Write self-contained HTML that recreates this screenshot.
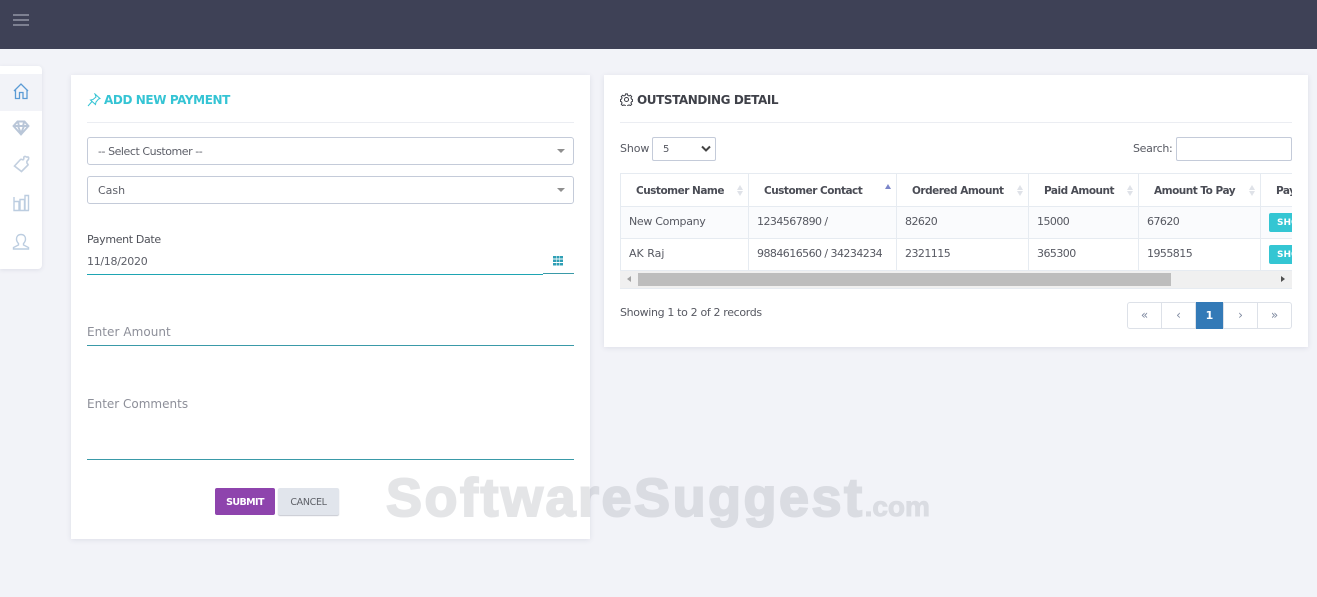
<!DOCTYPE html>
<html><head><meta charset="utf-8"><style>
html,body{margin:0;padding:0}
body{width:1317px;height:597px;background:#f2f3f8;position:relative;overflow:hidden;font-family:"DejaVu Sans","Liberation Sans",sans-serif;font-size:11px;color:#575962}
.a,.t{position:absolute}
.t{white-space:nowrap;line-height:14px}
.panel{position:absolute;background:#fff;box-shadow:0 1px 5px rgba(80,85,120,.12)}
.sel{position:absolute;left:87px;width:485px;height:26px;border:1px solid #c4cbd9;border-radius:3px;background:#fff}
.car{position:absolute;left:557px;width:0;height:0;border-left:4px solid transparent;border-right:4px solid transparent;border-top:4px solid #8f8f8f}
.line{position:absolute;height:1px}
.th{font-weight:bold;color:#4a4c55;font-size:10.5px;letter-spacing:-.5px}
.d{letter-spacing:-.55px}
.v{position:absolute;width:1px;background:#e6ebf1}
.h{position:absolute;left:620px;width:672px;height:1px;background:#e6ebf1}
.s{position:absolute;width:0;height:0;border-left:3px solid transparent;border-right:3px solid transparent}
.pg{position:absolute;top:302px;height:27px;box-sizing:border-box;border:1px solid #dde1e8;background:#fff;color:#7f8aa0;text-align:center;line-height:25px;font-size:12px}
</style></head><body>
<div class="a" style="left:0;top:0;width:1317px;height:49px;background:#3e4156"></div>
<div class="a" style="left:13px;top:14px;width:16px;height:2px;background:#7d8091"></div>
<div class="a" style="left:13px;top:19px;width:16px;height:2px;background:#7d8091"></div>
<div class="a" style="left:13px;top:24px;width:16px;height:2px;background:#7d8091"></div>

<div class="a" style="left:0;top:66px;width:42px;height:203px;background:#fff;border-radius:0 4px 4px 0;box-shadow:0 1px 4px rgba(80,85,120,.12)"></div>
<div class="a" style="left:0;top:74px;width:42px;height:37px;background:#f2f3f8"></div>
<svg class="a" style="left:0;top:66px" width="42" height="203" fill="none" stroke-width="1.3">
<path d="M14 25l7-7 7 7M15.500 23.500v9h4v-6h3.500v6h4v-9" stroke="#5b9bd5"/>
<path d="M17.500 55.500h7l4 4.500-7.500 8.500-7.500-8.500zM14 60h14M18 60l3 7.500 3-7.500M18 56l1 4M24 56l-1 4" stroke="#b9c6d8" stroke-width="1.900"/>
<path d="M14.500 100l6-6.500c1-1 2 1 3 0s-.5-2.500 1-3 1.500 1 3 .5 1.500 2 .5 3-1.500 1.500-1 3 1.500 1 1 2l-6.500 6.500z" stroke="#c2cfdf" stroke-width="1.600"/>
<path d="M14 131v13.500h5v-9h-5M20 144.500v-11h4.500v11M25 144.500v-15h3.500v15M14 144.500h15" stroke="#bccde0" stroke-width="1.400"/>
<path d="M21 168.500c3 0 4.500 2 4.500 4.500s-1 3.500-2 4.500v1.500l5 2.500v1.500h-15v-1.500l5-2.500v-1.500c-1-1-2-2-2-4.500s1.500-4.500 4.500-4.500z" stroke="#bccde0" stroke-width="1.400"/>
</svg>

<div class="panel" style="left:71px;top:75px;width:519px;height:464px"></div>
<svg class="a" style="left:87px;top:93px" width="15" height="15" fill="none" stroke="#35c4d4" stroke-width="1"><path d="M8 1l5 4.500-1.500.5-2.500 3-.5 2.500-5-4.500 2.500-.5 3-2.500zM5 8.500l-4 4.500"/></svg>
<div class="t" style="left:104px;top:93px;font-size:12px;font-weight:bold;color:#35c4d4;letter-spacing:-.4px">ADD NEW PAYMENT</div>
<div class="line" style="left:87px;top:122px;width:487px;background:#ebedf2"></div>
<div class="sel" style="top:137px"></div>
<div class="t" style="left:98px;top:145px;letter-spacing:-.45px;color:#5d5f68">-- Select Customer --</div>
<div class="car" style="top:149px"></div>
<div class="sel" style="top:176px"></div>
<div class="t" style="left:98px;top:184px;color:#5d5f68">Cash</div>
<div class="car" style="top:188px"></div>
<div class="t" style="left:87px;top:233px;color:#4f5159;letter-spacing:-.35px">Payment Date</div>
<div class="t" style="left:87px;top:255px;color:#5d5f68;letter-spacing:-.3px">11/18/2020</div>
<div class="line" style="left:87px;top:274px;width:456px;background:#1ea5b3"></div>
<div class="line" style="left:543px;top:273px;width:31px;background:#3a9aa8"></div>
<svg class="a" style="left:553px;top:256px" width="10" height="10" fill="#2f9fb5"><rect width="3" height="2.500"/><rect x="3.500" width="3" height="2.500"/><rect x="7" width="3" height="2.500"/><rect y="3.500" width="3" height="2.500"/><rect x="3.500" y="3.500" width="3" height="2.500"/><rect x="7" y="3.500" width="3" height="2.500"/><rect y="7" width="3" height="2.500"/><rect x="3.500" y="7" width="3" height="2.500"/><rect x="7" y="7" width="3" height="2.500"/></svg>
<div class="t" style="left:87px;top:325px;font-size:12px;color:#8d8f99;letter-spacing:.05px">Enter Amount</div>
<div class="line" style="left:87px;top:345px;width:487px;background:#3a9aa8"></div>
<div class="t" style="left:87px;top:397px;font-size:12px;color:#8d8f99;letter-spacing:0">Enter Comments</div>
<div class="line" style="left:87px;top:459px;width:487px;background:#3a9aa8"></div>
<div class="a" style="left:215px;top:488px;width:60px;height:27px;background:#8e44ad;border-radius:2px;color:#fff;text-align:center;line-height:29px;font-size:9.500px;font-weight:bold;letter-spacing:-.6px">SUBMIT</div>
<div class="a" style="left:278px;top:488px;width:61px;height:27px;background:#e1e5ec;border-radius:2px;box-shadow:0 1px 1px #c5c8d0;color:#5e6168;text-align:center;line-height:29px;font-size:9.500px;letter-spacing:-.3px">CANCEL</div>

<div class="panel" style="left:604px;top:75px;width:704px;height:272px"></div>
<svg class="a" style="left:620px;top:93px" width="13" height="13" viewBox="0 0 14 14" fill="none" stroke="#3f4149" stroke-width="1.100"><circle cx="7" cy="7" r="2.200"/><path d="M6 1h2l.4 1.600 1.400.6 1.400-.8 1.400 1.400-.8 1.400.6 1.400 1.100.4v2l-1.100.4-.6 1.400.8 1.400-1.400 1.400-1.400-.8-1.400.6-.4 1.100h-2l-.4-1.100-1.400-.6-1.400.8-1.400-1.400.8-1.400-.6-1.400-1.100-.4v-2l1.100-.4.6-1.400-.8-1.400 1.400-1.400 1.400.8 1.400-.6z"/></svg>
<div class="t" style="left:637px;top:93px;font-size:12px;font-weight:bold;color:#3f4149;letter-spacing:-.42px">OUTSTANDING DETAIL</div>
<div class="line" style="left:620px;top:122px;width:672px;background:#ebedf2"></div>
<div class="t" style="left:620px;top:142px;letter-spacing:-.1px">Show</div>
<div class="a" style="left:652px;top:137px;width:62px;height:22px;border:1px solid #c4cbd9;border-radius:2px"></div>
<div class="t" style="left:663px;top:143px;font-size:10px">5</div>
<svg class="a" style="left:701px;top:145px" width="10" height="8" fill="none" stroke="#444" stroke-width="2"><path d="M1 1.500l4 4 4-4"/></svg>
<div class="t" style="left:1133px;top:142px;letter-spacing:-.3px">Search:</div>
<div class="a" style="left:1176px;top:137px;width:114px;height:22px;border:1px solid #c4cbd9;border-radius:2px"></div>

<div class="a" style="left:620px;top:207px;width:672px;height:31px;background:#fafbfd"></div>
<div class="h" style="top:173px"></div><div class="h" style="top:206px"></div><div class="h" style="top:238px"></div><div class="h" style="top:270px"></div>
<div class="v" style="left:620px;top:173px;height:98px"></div>
<div class="v" style="left:748px;top:173px;height:98px"></div>
<div class="v" style="left:896px;top:173px;height:98px"></div>
<div class="v" style="left:1028px;top:173px;height:98px"></div>
<div class="v" style="left:1138px;top:173px;height:98px"></div>
<div class="v" style="left:1260px;top:173px;height:98px"></div>

<div class="t th" style="left:636px;top:184px">Customer Name</div>
<div class="t th" style="left:764px;top:184px">Customer Contact</div>
<div class="t th" style="left:912px;top:184px">Ordered Amount</div>
<div class="t th" style="left:1044px;top:184px">Paid Amount</div>
<div class="t th" style="left:1154px;top:184px">Amount To Pay</div>
<div class="a" style="left:1261px;top:174px;width:31px;height:32px;overflow:hidden"><div class="t th" style="left:15px;top:10px">Pay</div></div>

<div class="s" style="left:737px;top:185px;border-bottom:5px solid #dfe2e8"></div><div class="s" style="left:737px;top:191px;border-top:5px solid #dfe2e8"></div>
<div class="s" style="left:885px;top:184px;border-bottom:5px solid #7b85c9"></div>
<div class="s" style="left:1017px;top:185px;border-bottom:5px solid #dfe2e8"></div><div class="s" style="left:1017px;top:191px;border-top:5px solid #dfe2e8"></div>
<div class="s" style="left:1127px;top:185px;border-bottom:5px solid #dfe2e8"></div><div class="s" style="left:1127px;top:191px;border-top:5px solid #dfe2e8"></div>
<div class="s" style="left:1249px;top:185px;border-bottom:5px solid #dfe2e8"></div><div class="s" style="left:1249px;top:191px;border-top:5px solid #dfe2e8"></div>

<div class="t" style="left:629px;top:215px;letter-spacing:-.3px">New Company</div>
<div class="t d" style="left:757px;top:215px">1234567890 /</div>
<div class="t d" style="left:905px;top:215px">82620</div>
<div class="t d" style="left:1037px;top:215px">15000</div>
<div class="t d" style="left:1147px;top:215px">67620</div>
<div class="t" style="left:629px;top:247px">AK Raj</div>
<div class="t d" style="left:757px;top:247px">9884616560 / 34234234</div>
<div class="t d" style="left:905px;top:247px">2321115</div>
<div class="t d" style="left:1037px;top:247px">365300</div>
<div class="t d" style="left:1147px;top:247px">1955815</div>
<div class="a" style="left:1269px;top:213px;width:23px;height:19px;background:#34c6d3;overflow:hidden;border-radius:2px 0 0 2px"><div class="t" style="left:8px;top:3px;color:#fff;font-size:9px;font-weight:bold">SHOW</div></div>
<div class="a" style="left:1269px;top:245px;width:23px;height:19px;background:#34c6d3;overflow:hidden;border-radius:2px 0 0 2px"><div class="t" style="left:8px;top:3px;color:#fff;font-size:9px;font-weight:bold">SHOW</div></div>

<div class="a" style="left:620px;top:271px;width:672px;height:18px;background:#f0f0f0;border-bottom:1px solid #e6ebf1;box-sizing:border-box"></div>
<div class="a" style="left:638px;top:273px;width:533px;height:13px;background:#bdbdbd"></div>
<div class="a" style="left:627px;top:276px;width:0;height:0;border-top:3.500px solid transparent;border-bottom:3.500px solid transparent;border-right:4px solid #a3a3a3"></div>
<div class="a" style="left:1281px;top:276px;width:0;height:0;border-top:3.500px solid transparent;border-bottom:3.500px solid transparent;border-left:4px solid #505050"></div>

<div class="t" style="left:620px;top:306px;letter-spacing:-.35px">Showing 1 to 2 of 2 records</div>
<div class="pg" style="left:1127px;width:35px;border-radius:3px 0 0 3px">«</div>
<div class="pg" style="left:1161px;width:35px">‹</div>
<div class="pg" style="left:1223px;width:35px">›</div>
<div class="pg" style="left:1257px;width:35px;border-radius:0 3px 3px 0">»</div>
<div class="a" style="left:1196px;top:302px;width:27px;height:27px;background:#337ab7;color:#fff;text-align:center;line-height:28px;font-size:11px;font-weight:bold">1</div>

<div class="t" style="left:386px;top:468px;line-height:60px;font-family:'Liberation Sans',sans-serif;font-size:54px;font-weight:bold;color:#7d828c;opacity:.2;-webkit-text-stroke:2px #7d828c;letter-spacing:2.500px">SoftwareSuggest<span style="font-size:28px;letter-spacing:0;-webkit-text-stroke:1px #7d828c">.com</span></div>
</body></html>
